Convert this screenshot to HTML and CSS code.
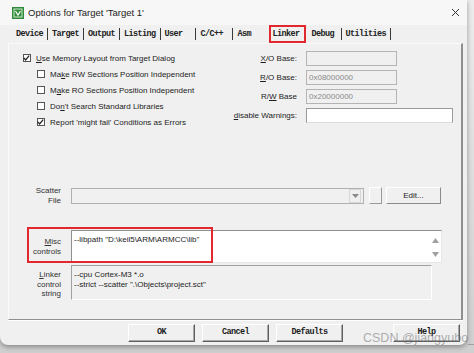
FILE: index.html
```html
<!DOCTYPE html>
<html lang="en">
<head>
    <meta charset="UTF-8">
    <title>Options for Target 'Target 1'</title>
    <link rel="stylesheet" href="styles.css">
</head>
<body>
    <div class="window">
        <div class="titlebar">
            <span class="app-icon">
                <svg width="12" height="12" viewBox="0 0 12 12">
                    <rect x="0" y="0" width="12" height="12" fill="#2f8a3a"/>
                    <rect x="2" y="2" width="8" height="8" fill="none" stroke="#cfe8cf" stroke-width="1"/>
                    <polyline points="3.5,4 6,8 8.5,4" fill="none" stroke="#fff" stroke-width="1.2"/>
                </svg>
            </span>
            <span class="title">Options for Target 'Target 1'</span>
            <span class="close">
                <svg width="9" height="9" viewBox="0 0 9 9">
                    <path d="M1 1 L8 8 M8 1 L1 8" stroke="#333" stroke-width="1"/>
                </svg>
            </span>
        </div>

        <div class="tabs">
            <span class="tab">Device</span>
            <span class="tab">Target</span>
            <span class="tab">Output</span>
            <span class="tab">Listing</span>
            <span class="tab">User</span>
            <span class="tab tab-cpp">C/C++</span>
            <span class="tab tab-asm">Asm</span>
            <span class="tab tab-active">Linker</span>
            <span class="tab tab-debug">Debug</span>
            <span class="tab">Utilities</span>
        </div>

        <div class="panel">
            <div class="top">
                <div class="checks">
                    <div class="check">
                        <span class="box"><svg width="8" height="8" viewBox="0 0 8 8"><path d="M1 3.8 L3 6.2 L7 1.2" fill="none" stroke="#222" stroke-width="1.4"/></svg></span>
                        <span><u>U</u>se Memory Layout from Target Dialog</span>
                    </div>
                    <div class="check indent">
                        <span class="box"></span>
                        <span>Ma<u>k</u>e RW Sections Position Independent</span>
                    </div>
                    <div class="check indent">
                        <span class="box"></span>
                        <span>M<u>a</u>ke RO Sections Position Independent</span>
                    </div>
                    <div class="check indent">
                        <span class="box"></span>
                        <span>Do<u>n</u>'t Search Standard Libraries</span>
                    </div>
                    <div class="check indent">
                        <span class="box"><svg width="8" height="8" viewBox="0 0 8 8"><path d="M1 3.8 L3 6.2 L7 1.2" fill="none" stroke="#222" stroke-width="1.4"/></svg></span>
                        <span>Report 'might fail' Conditions as Errors</span>
                    </div>
                </div>
                <div class="bases">
                    <div class="base-row">
                        <span class="base-label"><u>X</u>/O Base:</span>
                        <span class="field disabled"></span>
                    </div>
                    <div class="base-row">
                        <span class="base-label"><u>R</u>/O Base:</span>
                        <span class="field disabled">0x08000000</span>
                    </div>
                    <div class="base-row">
                        <span class="base-label">R/<u>W</u> Base</span>
                        <span class="field disabled">0x20000000</span>
                    </div>
                    <div class="base-row">
                        <span class="base-label"><u>d</u>isable Warnings:</span>
                        <span class="field wide"></span>
                    </div>
                </div>
            </div>

            <div class="ctl-row scatter">
                <span class="ctl-label">Scatter<br>File</span>
                <span class="combo">
                    <span class="combo-arrow">
                        <svg width="7" height="4" viewBox="0 0 7 4"><path d="M0 0 L7 0 L3.5 4 Z" fill="#8a8a8a"/></svg>
                    </span>
                </span>
                <span class="btn-small"></span>
                <span class="btn-edit">Edit...</span>
            </div>

            <div class="ctl-row misc">
                <span class="ctl-label"><u>M</u>isc<br>controls</span>
                <div class="memo">
                    <span class="memo-text">--libpath "D:\keil5\ARM\ARMCC\lib"</span>
                    <span class="memo-scroll">
                        <svg width="7" height="5" viewBox="0 0 7 5"><path d="M0 5 L7 5 L3.5 0 Z" fill="#a0a0a0"/></svg>
                        <svg width="7" height="5" viewBox="0 0 7 5"><path d="M0 0 L7 0 L3.5 5 Z" fill="#a0a0a0"/></svg>
                    </span>
                </div>
                <span class="mark"></span>
            </div>

            <div class="ctl-row linker">
                <span class="ctl-label"><u>L</u>inker<br>control<br>string</span>
                <div class="readonly">
                    --cpu Cortex-M3 *.o<br>
                    --strict --scatter ".\Objects\project.sct"
                </div>
            </div>
        </div>

        <div class="buttons">
            <span class="btn">OK</span>
            <span class="btn">Cancel</span>
            <span class="btn">Defaults</span>
            <span class="btn btn-help">Help</span>
        </div>

        <div class="watermark">CSDN @jiangyubo_</div>
    </div>
</body>
</html>
```

FILE: styles.css
```css
body {
    margin: 0;
    height: 353px;
    overflow: hidden;
    background: linear-gradient(#ececec, #cfcfcf);
    font-family: 'Liberation Sans', Arial, sans-serif;
    font-size: 8px;
    color: #1c1c1c;
}

.window {
    position: relative;
    width: 467px;
    height: 345px;
    background: #f0f0f0;
    border-radius: 0 0 8px 8px;
    box-shadow: 0 2px 5px rgba(0, 0, 0, 0.35);
}

.titlebar {
    height: 25px;
    display: flex;
    align-items: center;
    padding-left: 12px;
    background: #f7f7f7;
}

.app-icon {
    display: flex;
    margin-right: 4px;
}

.title {
    font-size: 9.5px;
    color: #222;
}

.close {
    display: flex;
    margin-left: auto;
    margin-right: 7px;
}

.tabs {
    display: flex;
    align-items: center;
    height: 18px;
    padding-left: 12px;
    font-family: 'Liberation Mono', 'Courier New', monospace;
    font-weight: bold;
    font-size: 8.5px;
    letter-spacing: -0.6px;
    color: #222;
}

.tab {
    box-sizing: border-box;
    min-width: 35px;
    line-height: 12px;
    padding: 0 4px;
    border-right: 1px solid #3a3a3a;
}

.tab-cpp {
    min-width: 37px;
    padding-left: 5px;
}

.tab-asm {
    padding-left: 5px;
    border-right: none;
}

.tab-active {
    min-width: 34px;
    height: 18px;
    line-height: 14px;
    margin-left: 1px;
    padding-left: 2px;
    border: 2px solid #e0282e;
}

.tab-debug {
    min-width: 36px;
    padding-left: 6px;
}

.panel {
    box-sizing: border-box;
    height: 277px;
    margin: 0 4px 0 8px;
    border-top: 1px solid #fbfbfb;
    border-left: 1px solid #fbfbfb;
    border-right: 2px solid #8f8f8f;
    border-bottom: 1px solid #8f8f8f;
    box-shadow: 0 1px 0 #fff;
}

.top {
    display: flex;
}

.checks {
    flex: 1;
    padding: 6px 0 0 14px;
}

.check {
    display: flex;
    align-items: center;
    height: 16px;
}

.check.indent {
    padding-left: 14px;
}

.box {
    box-sizing: border-box;
    width: 8px;
    height: 8px;
    margin-right: 5px;
    background: #fff;
    border: 1px solid #555;
    display: flex;
}

.box svg {
    margin: -1px 0 0 -1px;
}

.bases {
    width: 236px;
    padding-top: 7px;
}

.base-row {
    display: flex;
    align-items: center;
    height: 15px;
    margin-bottom: 4px;
}

.base-label {
    width: 72px;
    margin-right: 9px;
    text-align: right;
    white-space: nowrap;
}

.field {
    box-sizing: border-box;
    height: 15px;
    width: 91px;
    padding-left: 2px;
    line-height: 13px;
    color: #8a8a8a;
}

.field.disabled {
    background: #f0f0f0;
    border: 1px solid #b4b4b4;
}

.field.wide {
    width: 147px;
    background: #fff;
    border: 1px solid #9a9a9a;
    border-bottom-color: #dcdcdc;
}

.ctl-row {
    display: flex;
    align-items: center;
}

.ctl-label {
    width: 52px;
    margin-right: 10px;
    text-align: right;
    line-height: 9.5px;
    color: #333;
}

.scatter {
    height: 17px;
    margin-top: 57px;
}

.combo {
    box-sizing: border-box;
    width: 293px;
    height: 16px;
    background: #f0f0f0;
    border: 1px solid #b0b0b0;
    display: flex;
    justify-content: flex-end;
    align-items: center;
}

.combo-arrow {
    display: flex;
    align-items: center;
    justify-content: center;
    width: 10px;
    height: 12px;
    margin-right: 2px;
    border: 1px solid #d6d6d6;
}

.btn-small {
    box-sizing: border-box;
    width: 13px;
    height: 17px;
    margin-left: 5px;
    border: 1px solid;
    border-color: #fff #9a9a9a #9a9a9a #fff;
}

.btn-edit {
    box-sizing: border-box;
    width: 55px;
    height: 17px;
    margin-left: 4px;
    text-align: center;
    line-height: 15px;
    border: 1px solid;
    border-color: #fff #8a8a8a #8a8a8a #fff;
}

.misc {
    position: relative;
    height: 33px;
    margin-top: 26px;
}

.memo {
    box-sizing: border-box;
    width: 371px;
    height: 33px;
    display: flex;
    background: #fff;
    border: 1px solid;
    border-color: #8f8f8f #e6e6e6 #e6e6e6 #8f8f8f;
}

.memo-text {
    flex: 1;
    padding: 4px 0 0 2px;
}

.memo-scroll {
    width: 12px;
    display: flex;
    flex-direction: column;
    justify-content: space-between;
    align-items: center;
    padding: 7px 0 5px;
}

.mark {
    position: absolute;
    left: 18px;
    top: -3px;
    width: 186px;
    height: 36px;
    box-sizing: border-box;
    border: 2px solid #e0282e;
}

.linker {
    height: 35px;
    margin-top: 2px;
}

.linker .ctl-label {
    padding-top: 4px;
}

.readonly {
    box-sizing: border-box;
    width: 361px;
    height: 35px;
    padding: 4px 0 0 2px;
    line-height: 9.5px;
    border: 1px solid;
    border-color: #a0a0a0 #fff #fff #a0a0a0;
}

.buttons {
    display: flex;
    margin-top: 4px;
    padding-left: 128px;
    font-family: 'Liberation Mono', 'Courier New', monospace;
    font-weight: bold;
    font-size: 8.5px;
    letter-spacing: -0.6px;
}

.btn {
    box-sizing: border-box;
    width: 68px;
    height: 18px;
    margin-right: 7px;
    text-align: center;
    line-height: 15px;
    border: 1px solid;
    border-color: #fff #5f5f5f #5f5f5f #fff;
    box-shadow: inset -1px -1px 0 #a8a8a8;
}

.btn-help {
    margin-left: 43px;
}

.watermark {
    position: absolute;
    left: 363px;
    top: 331px;
    white-space: nowrap;
    font-size: 12.5px;
    color: rgba(110, 110, 110, 0.55);
}
```
